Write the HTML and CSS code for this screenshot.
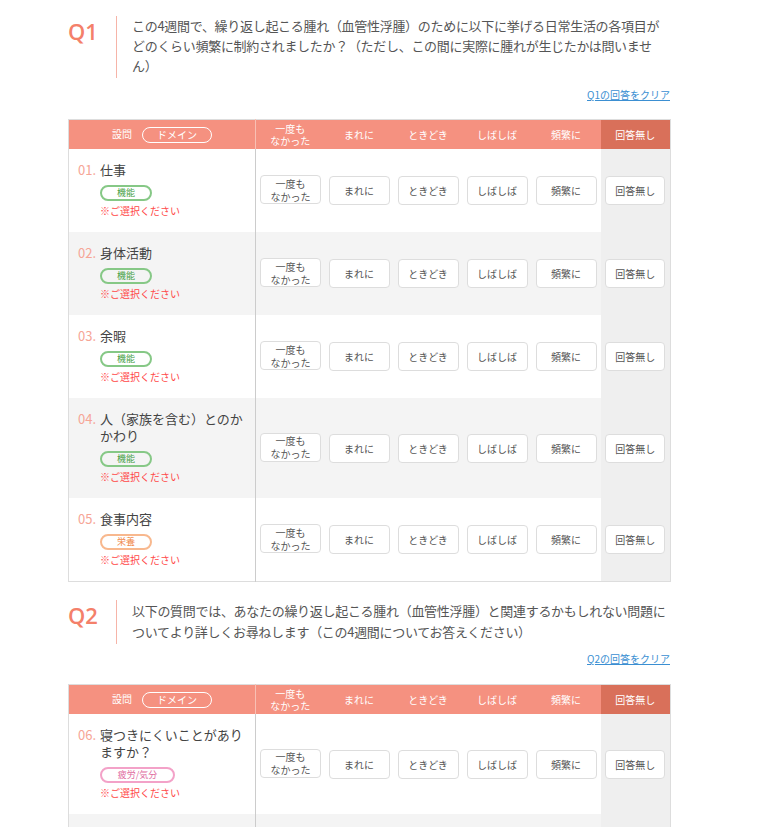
FILE: index.html
```html
<!DOCTYPE html>
<html lang="ja">
<head>
    <meta charset="UTF-8">
    <meta name="viewport" content="width=device-width, initial-scale=1.0">
    <title>アンケート</title>
    <link rel="stylesheet" href="styles.css">
</head>
<body>
    <div class="survey">

        <div class="question">
            <div class="q-label">Q1</div>
            <p class="q-text">この4週間で、繰り返し起こる腫れ（血管性浮腫）のために以下に挙げる日常生活の各項目がどのくらい頻繁に制約されましたか？（ただし、この間に実際に腫れが生じたかは問いません）</p>
        </div>
        <div class="clear-link"><a href="#">Q1の回答をクリア</a></div>

        <table class="answers">
            <colgroup>
                <col class="col-item">
                <col class="col-opt"><col class="col-opt"><col class="col-opt"><col class="col-opt"><col class="col-opt">
                <col class="col-none">
            </colgroup>
            <thead>
                <tr>
                    <th class="head-item">設問<span class="domain-pill">ドメイン</span></th>
                    <th>一度も<br>なかった</th>
                    <th>まれに</th>
                    <th>ときどき</th>
                    <th>しばしば</th>
                    <th>頻繁に</th>
                    <th class="head-none">回答無し</th>
                </tr>
            </thead>
            <tbody>
                <tr>
                    <td class="item">
                        <div class="item-title"><span class="num">01.</span><span>仕事</span></div>
                        <div class="item-meta">
                            <span class="tag tag-func">機能</span>
                            <div class="required">※ご選択ください</div>
                        </div>
                    </td>
                    <td><button class="opt">一度も<br>なかった</button></td>
                    <td><button class="opt">まれに</button></td>
                    <td><button class="opt">ときどき</button></td>
                    <td><button class="opt">しばしば</button></td>
                    <td><button class="opt">頻繁に</button></td>
                    <td class="none"><button class="opt">回答無し</button></td>
                </tr>
                <tr class="alt">
                    <td class="item">
                        <div class="item-title"><span class="num">02.</span><span>身体活動</span></div>
                        <div class="item-meta">
                            <span class="tag tag-func">機能</span>
                            <div class="required">※ご選択ください</div>
                        </div>
                    </td>
                    <td><button class="opt">一度も<br>なかった</button></td>
                    <td><button class="opt">まれに</button></td>
                    <td><button class="opt">ときどき</button></td>
                    <td><button class="opt">しばしば</button></td>
                    <td><button class="opt">頻繁に</button></td>
                    <td class="none"><button class="opt">回答無し</button></td>
                </tr>
                <tr>
                    <td class="item">
                        <div class="item-title"><span class="num">03.</span><span>余暇</span></div>
                        <div class="item-meta">
                            <span class="tag tag-func">機能</span>
                            <div class="required">※ご選択ください</div>
                        </div>
                    </td>
                    <td><button class="opt">一度も<br>なかった</button></td>
                    <td><button class="opt">まれに</button></td>
                    <td><button class="opt">ときどき</button></td>
                    <td><button class="opt">しばしば</button></td>
                    <td><button class="opt">頻繁に</button></td>
                    <td class="none"><button class="opt">回答無し</button></td>
                </tr>
                <tr class="alt">
                    <td class="item">
                        <div class="item-title"><span class="num">04.</span><span>人（家族を含む）とのかかわり</span></div>
                        <div class="item-meta">
                            <span class="tag tag-func">機能</span>
                            <div class="required">※ご選択ください</div>
                        </div>
                    </td>
                    <td><button class="opt">一度も<br>なかった</button></td>
                    <td><button class="opt">まれに</button></td>
                    <td><button class="opt">ときどき</button></td>
                    <td><button class="opt">しばしば</button></td>
                    <td><button class="opt">頻繁に</button></td>
                    <td class="none"><button class="opt">回答無し</button></td>
                </tr>
                <tr>
                    <td class="item">
                        <div class="item-title"><span class="num">05.</span><span>食事内容</span></div>
                        <div class="item-meta">
                            <span class="tag tag-food">栄養</span>
                            <div class="required">※ご選択ください</div>
                        </div>
                    </td>
                    <td><button class="opt">一度も<br>なかった</button></td>
                    <td><button class="opt">まれに</button></td>
                    <td><button class="opt">ときどき</button></td>
                    <td><button class="opt">しばしば</button></td>
                    <td><button class="opt">頻繁に</button></td>
                    <td class="none"><button class="opt">回答無し</button></td>
                </tr>
            </tbody>
        </table>

        <div class="question q2">
            <div class="q-label">Q2</div>
            <p class="q-text">以下の質問では、あなたの繰り返し起こる腫れ（血管性浮腫）と関連するかもしれない問題についてより詳しくお尋ねします（この4週間についてお答えください）</p>
        </div>
        <div class="clear-link"><a href="#">Q2の回答をクリア</a></div>

        <table class="answers">
            <colgroup>
                <col class="col-item">
                <col class="col-opt"><col class="col-opt"><col class="col-opt"><col class="col-opt"><col class="col-opt">
                <col class="col-none">
            </colgroup>
            <thead>
                <tr>
                    <th class="head-item">設問<span class="domain-pill">ドメイン</span></th>
                    <th>一度も<br>なかった</th>
                    <th>まれに</th>
                    <th>ときどき</th>
                    <th>しばしば</th>
                    <th>頻繁に</th>
                    <th class="head-none">回答無し</th>
                </tr>
            </thead>
            <tbody>
                <tr>
                    <td class="item">
                        <div class="item-title"><span class="num">06.</span><span>寝つきにくいことがありますか？</span></div>
                        <div class="item-meta">
                            <span class="tag tag-mood">疲労/気分</span>
                            <div class="required">※ご選択ください</div>
                        </div>
                    </td>
                    <td><button class="opt">一度も<br>なかった</button></td>
                    <td><button class="opt">まれに</button></td>
                    <td><button class="opt">ときどき</button></td>
                    <td><button class="opt">しばしば</button></td>
                    <td><button class="opt">頻繁に</button></td>
                    <td class="none"><button class="opt">回答無し</button></td>
                </tr>
                <tr class="alt filler">
                    <td class="item"></td>
                    <td></td><td></td><td></td><td></td><td></td>
                    <td class="none"></td>
                </tr>
            </tbody>
        </table>

    </div>
</body>
</html>
```

FILE: styles.css
```css
/* survey page */
body {
    margin: 0;
    padding: 0;
    background: #fff;
    color: #555;
    font-family: "Noto Sans CJK JP", "Noto Sans", sans-serif;
}

.survey {
    width: 602px;
    margin: 0 0 0 68px;
    padding-top: 16px;
}

.question {
    display: flex;
    align-items: flex-start;
}

.q2 {
    margin-top: 18px;
}

.q-label {
    width: 48px;
    flex-shrink: 0;
    padding-top: 0;
    color: #f4806a;
    font-family: "Open Sans", "Noto Sans", sans-serif;
    font-size: 22px;
    font-weight: 600;
    line-height: 30px;
}

.q-text {
    margin: 0;
    padding: 0 4px 2px 15px;
    border-left: 1px solid #f6b4a8;
    font-size: 13px;
    letter-spacing: -0.3px;
    line-height: 20px;
    color: #555;
}

.q2 .q-text {
    line-height: 21px;
}

.clear-link {
    margin-top: 10px;
    text-align: right;
    font-size: 10px;
    line-height: 14px;
}

.q2 + .clear-link {
    margin-top: 8px;
}

.clear-link a {
    color: #3b8fd2;
    text-decoration: underline;
}

.answers {
    width: 602px;
    margin-top: 17px;
    border-collapse: collapse;
    table-layout: fixed;
    border: 1px solid #ddd;
}

.q2 + .clear-link + .answers {
    margin-top: 18px;
}

.col-item {
    width: 187px;
}

.col-opt {
    width: 69px;
}

.col-none {
    width: 70px;
}

.answers th {
    height: 29px;
    padding: 0;
    background: #f59180;
    color: #fff;
    font-size: 10px;
    font-weight: normal;
    line-height: 12px;
    text-align: center;
}

.answers th.head-item {
    border-right: 1px solid #f8c0b4;
}

.answers th.head-none {
    background: #d9705a;
}

.domain-pill {
    display: inline-block;
    margin-left: 10px;
    width: 68px;
    height: 14px;
    border: 1.5px solid #fff;
    border-radius: 9px;
    line-height: 14px;
    vertical-align: middle;
}

.answers td {
    padding: 0 4px;
    text-align: center;
    vertical-align: middle;
}

.answers tr.alt td {
    background: #f4f4f4;
}

.answers td.item {
    padding: 12px 8px 15px 9px;
    border-right: 1px solid #ccc;
    text-align: left;
    vertical-align: top;
}

.answers td.none,
.answers tr.alt td.none {
    background: #efefef;
}

.item-title {
    display: flex;
    font-size: 13px;
    line-height: 17px;
    color: #444;
}

.num {
    width: 22px;
    flex-shrink: 0;
    color: #f6a596;
}

.item-meta {
    display: flex;
    flex-direction: column;
    align-items: flex-start;
    margin-left: 22px;
    margin-top: 7px;
}

.tag {
    display: block;
    box-sizing: border-box;
    width: 52px;
    height: 16px;
    border: 2px solid;
    border-radius: 8px;
    font-size: 9px;
    line-height: 12px;
    text-align: center;
}

.tag-func {
    border-color: #86c886;
    color: #45a045;
}

.tag-food {
    border-color: #f8b88e;
    color: #f08848;
}

.tag-mood {
    width: 75px;
    border-color: #f3a2c8;
    color: #e06aa0;
}

.required {
    margin-top: 4px;
    color: #ff4848;
    font-size: 10px;
    line-height: 12px;
}

.opt {
    box-sizing: border-box;
    width: 61px;
    height: 29px;
    padding: 0;
    border: 1px solid #ddd;
    border-radius: 4px;
    background: #fff;
    color: #555;
    font-family: "Noto Sans CJK JP", sans-serif;
    font-size: 10px;
    line-height: 13px;
    cursor: pointer;
}

.none .opt {
    width: 60px;
}

.filler td,
.answers tr.filler td.item {
    height: 40px;
    padding: 0;
}
```
